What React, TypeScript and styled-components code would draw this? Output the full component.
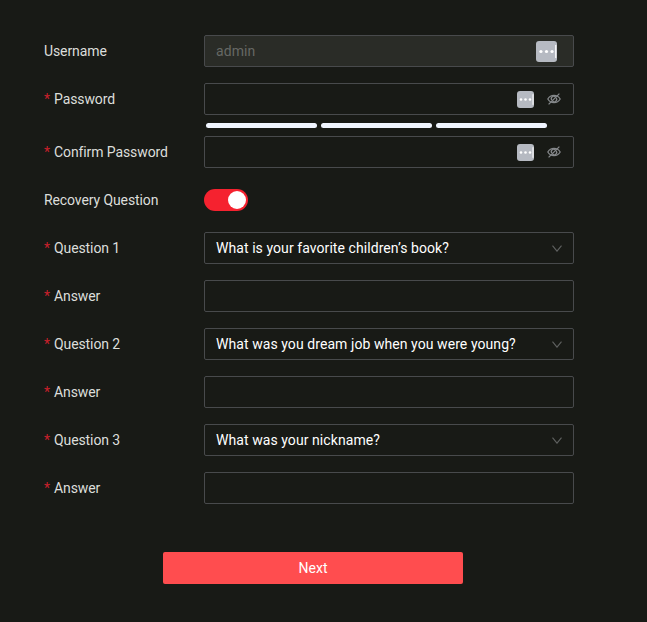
import React, { FC } from "react";
import styled, { createGlobalStyle } from "styled-components";

const GlobalStyle = createGlobalStyle`
  html, body {
    margin: 0;
    padding: 0;
    background: #181a16;
  }
`;

const Page = styled.div`
  width: 647px;
  height: 622px;
  box-sizing: border-box;
  padding: 35px 0 0 44px;
  background: #181a16;
  font-family: Roboto, sans-serif;
  font-size: 14px;
  overflow: hidden;
`;

const Form = styled.form`
  display: flex;
  flex-direction: column;
  width: 530px;
`;

const Row = styled.div<{ $gap?: number }>`
  display: flex;
  align-items: center;
  min-height: 32px;
  margin-bottom: ${(p) => p.$gap ?? 16}px;
`;

const Label = styled.label`
  width: 160px;
  flex-shrink: 0;
  color: #dcdedb;
  line-height: 20px;
  letter-spacing: -0.1px;
`;

const Star = styled.span`
  display: inline-block;
  width: 10px;
  color: #c9202c;
`;

const Field = styled.div<{ $disabled?: boolean }>`
  width: 370px;
  height: 32px;
  box-sizing: border-box;
  display: flex;
  align-items: center;
  padding: 0 11px;
  border: 1px solid #484a4c;
  border-radius: 2px;
  background: ${(p) => (p.$disabled ? "#2a2c27" : "transparent")};
  color: ${(p) => (p.$disabled ? "#666864" : "#ffffff")};
`;

const FieldText = styled.span`
  flex: 1;
  white-space: nowrap;
  letter-spacing: 0.07px;
`;

const KeyBadge = styled.span<{ $large?: boolean }>`
  width: ${(p) => (p.$large ? 21 : 17)}px;
  height: ${(p) => (p.$large ? 21 : 17)}px;
  border-radius: 3px;
  background: #b6bac2;
  display: flex;
  align-items: center;
  justify-content: center;
  margin-right: ${(p) => (p.$large ? 5 : 0)}px;
`;

const EyeSlot = styled.span`
  display: flex;
  margin: 0 1px 0 13px;
`;

const ChevronSlot = styled.span`
  display: flex;
`;

const Strength = styled.div`
  display: flex;
  gap: 4px;
  margin: -8px 0 8px 162px;
`;

const StrengthBar = styled.span`
  width: 111px;
  height: 5px;
  border-radius: 3px;
  background: #f0f5ff;
`;

const Toggle = styled.span`
  width: 44px;
  height: 22px;
  box-sizing: border-box;
  padding: 2px;
  border-radius: 11px;
  background: #f5222f;
  display: flex;
  justify-content: flex-end;
`;

const Knob = styled.span`
  width: 18px;
  height: 18px;
  border-radius: 50%;
  background: #ffffff;
`;

const Actions = styled.div`
  display: flex;
  padding: 32px 0 0 119px;
`;

const NextButton = styled.button`
  width: 300px;
  height: 32px;
  border: none;
  border-radius: 2px;
  background: #ff4d4f;
  color: #ffffff;
  font-family: inherit;
  font-size: 14px;
  padding: 0;
`;

const DotsIcon: FC<{ size: number }> = ({ size }) => (
  <svg width={size} height={size} viewBox="0 0 17 17">
    <circle cx="4" cy="8.5" r="1.3" fill="#fff" />
    <circle cx="8.5" cy="8.5" r="1.3" fill="#fff" />
    <circle cx="13" cy="8.5" r="1.3" fill="#fff" />
    <rect x="15.5" y="3.2" width="1" height="10.6" fill="#fff" />
  </svg>
);

const EyeOff: FC = () => (
  <svg width="14" height="14" viewBox="0 0 14 14" fill="none" stroke="#85888b" strokeWidth="1.25">
    <path d="M0.8 7C2.2 4.7 4.4 3.4 7 3.4S11.8 4.7 13.2 7C11.8 9.3 9.6 10.6 7 10.6S2.2 9.3 0.8 7Z" />
    <path d="M4.9 8.2A2.4 2.4 0 0 1 8.6 5.1M9.1 5.8A2.4 2.4 0 0 1 5.4 8.9" />
    <path d="M1.6 12.4L12.4 1.6" />
  </svg>
);

const Chevron: FC = () => (
  <svg width="10" height="7" viewBox="0 0 10 7" fill="none" stroke="#5f6160" strokeWidth="1.1">
    <path d="M0.5 0.6L5 6.2L9.5 0.6" />
  </svg>
);

interface FormRowProps {
  label: string;
  required?: boolean;
  gap?: number;
  children: React.ReactNode;
}

const FormRow: FC<FormRowProps> = ({ label, required, gap, children }) => (
  <Row $gap={gap}>
    <Label>
      {required && <Star>*</Star>}
      {label}
    </Label>
    {children}
  </Row>
);

const PasswordField: FC = () => (
  <Field>
    <FieldText />
    <KeyBadge>
      <DotsIcon size={17} />
    </KeyBadge>
    <EyeSlot>
      <EyeOff />
    </EyeSlot>
  </Field>
);

const questions = [
  "What is your favorite children’s book?",
  "What was you dream job when you were young?",
  "What was your nickname?",
];

export default function App() {
  return (
    <Page>
      <GlobalStyle />
      <Form>
        <FormRow label="Username">
          <Field $disabled>
            <FieldText>admin</FieldText>
            <KeyBadge $large>
              <DotsIcon size={21} />
            </KeyBadge>
          </Field>
        </FormRow>
        <FormRow label="Password" required>
          <PasswordField />
        </FormRow>
        <Strength>
          <StrengthBar />
          <StrengthBar />
          <StrengthBar />
        </Strength>
        <FormRow label="Confirm Password" required>
          <PasswordField />
        </FormRow>
        <FormRow label="Recovery Question">
          <Toggle>
            <Knob />
          </Toggle>
        </FormRow>
        {questions.map((q, i) => (
          <React.Fragment key={q}>
            <FormRow label={`Question ${i + 1}`} required>
              <Field>
                <FieldText>{q}</FieldText>
                <ChevronSlot>
                  <Chevron />
                </ChevronSlot>
              </Field>
            </FormRow>
            <FormRow label="Answer" required>
              <Field />
            </FormRow>
          </React.Fragment>
        ))}
        <Actions>
          <NextButton type="button">Next</NextButton>
        </Actions>
      </Form>
    </Page>
  );
}
